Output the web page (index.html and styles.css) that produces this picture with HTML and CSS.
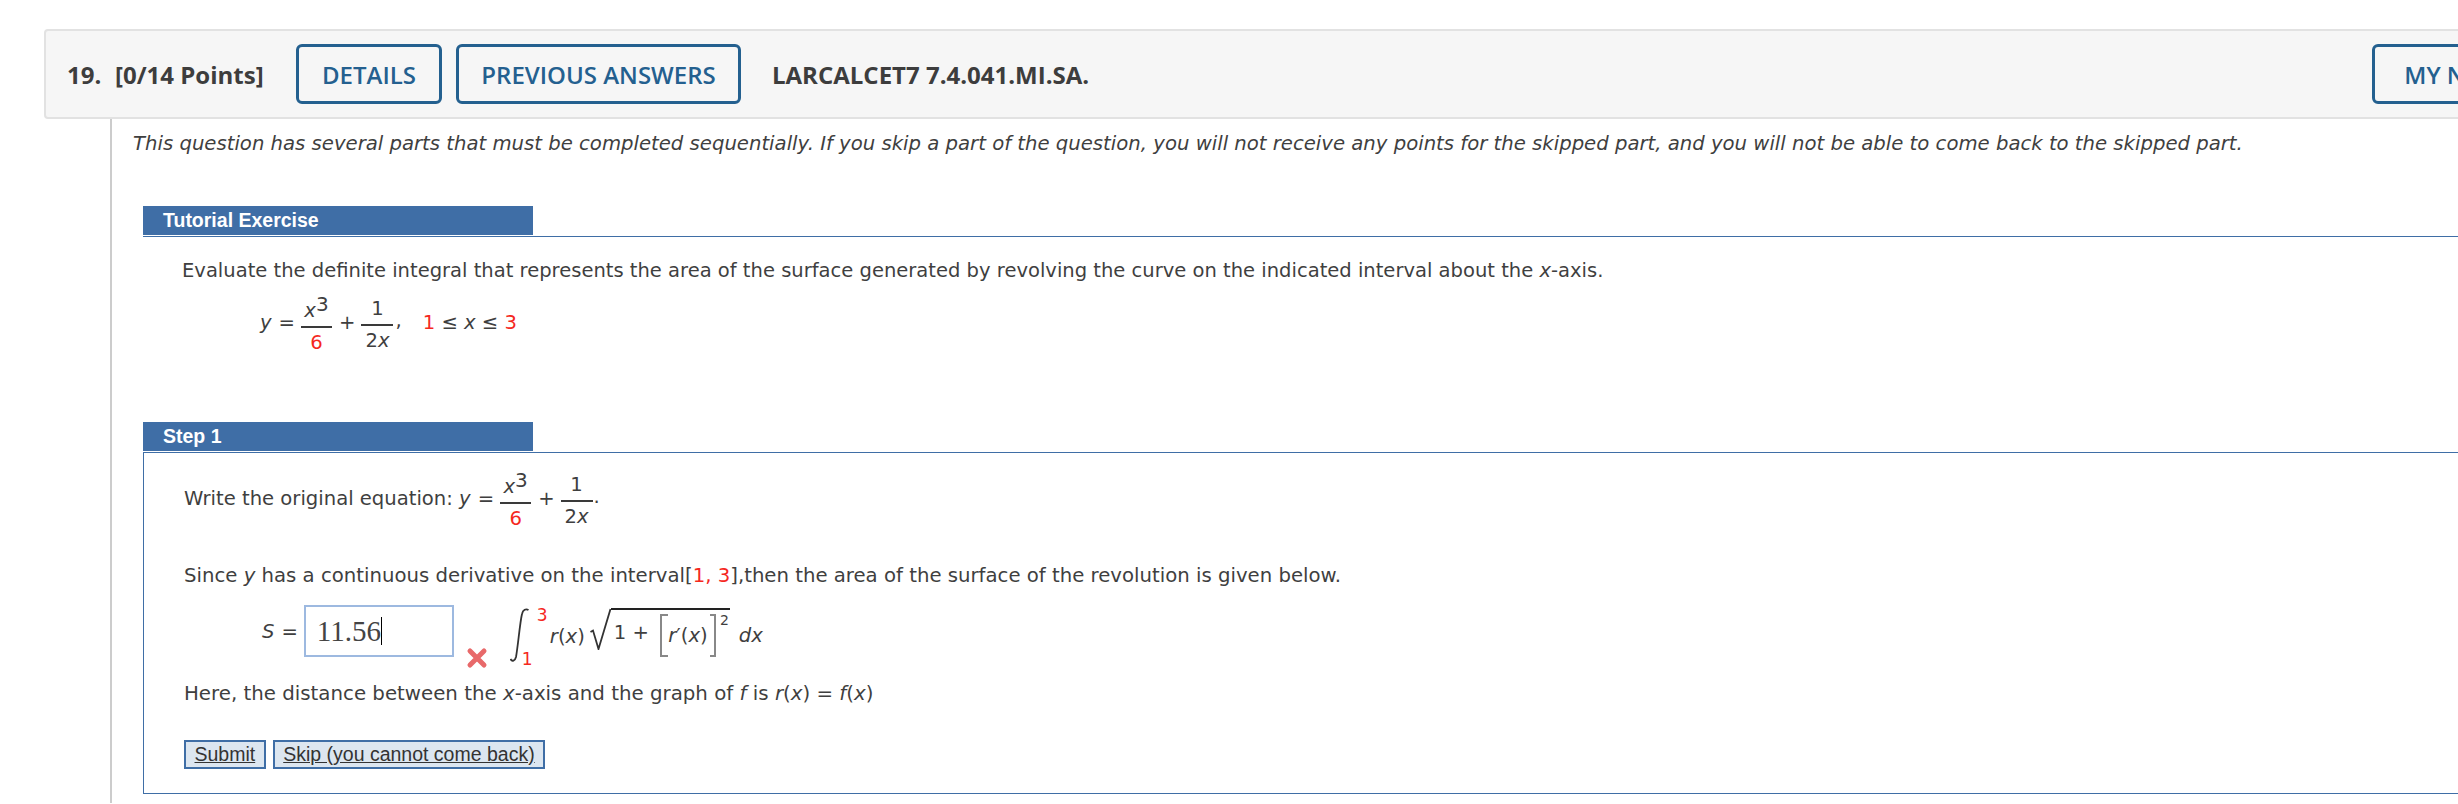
FILE: index.html
```html
<!DOCTYPE html>
<html lang="en">
<head>
<meta charset="utf-8">
<title>Question 19</title>
<link rel="stylesheet" href="styles.css">
</head>
<body>
<div class="page">
  <header class="qhead">
    <span class="qnum">19.</span>
    <span class="qpts">[0/14 Points]</span>
    <a class="hbtn btn-details">DETAILS</a>
    <a class="hbtn btn-prev">PREVIOUS ANSWERS</a>
    <span class="qref">LARCALCET7 7.4.041.MI.SA.</span>
    <a class="hbtn btn-notes">MY NOTES</a>
  </header>
  <main class="qbody">
    <p class="intro">This question has several parts that must be completed sequentially. If you skip a part of the question, you will not receive any points for the skipped part, and you will not be able to come back to the skipped part.</p>

    <section class="tutorial">
      <h2 class="banner">Tutorial Exercise</h2>
      <div class="tut-content">
        <p class="line evaluate">Evaluate the definite integral that represents the area of the surface generated by revolving the curve on the indicated interval about the <i>x</i>-axis.</p>
        <div class="eq eq-first">
          <i>y</i><span class="op">=</span>
          <span class="frac frac-a"><span class="num"><i>x</i><sup>3</sup></span><span class="den red">6</span></span>
          <span class="op">+</span>
          <span class="frac frac-b"><span class="num">1</span><span class="den">2<i>x</i></span></span><span class="comma">,</span>
          <span class="range"><span class="red">1</span> ≤ <i>x</i> ≤ <span class="red">3</span></span>
        </div>
      </div>
    </section>

    <section class="step">
      <h2 class="banner">Step 1</h2>
      <div class="step-box">
        <div class="eq eq-write">
          <span>Write the original equation:&nbsp;<i>y</i></span><span class="op">=</span>
          <span class="frac frac-a"><span class="num"><i>x</i><sup>3</sup></span><span class="den red">6</span></span>
          <span class="op">+</span>
          <span class="frac frac-b"><span class="num">1</span><span class="den">2<i>x</i></span></span><span class="dot">.</span>
        </div>
        <p class="line since">Since <i>y</i> has a continuous derivative on the interval[<span class="red">1, 3</span>],then the area of the surface of the revolution is given below.</p>
        <div class="answer">
          <i class="s-label">S</i><span class="op">=</span>
          <div class="field"><span class="field-val">11.56</span></div>
          <svg class="wrong" viewBox="0 0 22 22" aria-hidden="true"><path d="M4 4 L18 18 M18 4 L4 18"/></svg>
          <div class="integral">
            <svg class="int-sign" viewBox="0 0 19 54" aria-hidden="true"><path d="M0.500 51 C2 54 5 53 6 49 C8 38 10 14 12 6 C13 1.500 16 0.500 18.500 2"/></svg>
            <span class="lim lim-up red">3</span>
            <span class="lim lim-lo red">1</span>
          </div>
          <span class="rx"><i>r</i>(<i>x</i>)</span>
          <svg class="rad" viewBox="0 0 21 42" aria-hidden="true"><path d="M0.500 24 L3 22.500 L8.500 41 L20.500 1"/></svg>
          <span class="under">
            <span class="one-plus">1 +</span>
            <span class="brk"><i>r</i>′(<i>x</i>)</span>
            <sup class="pow">2</sup>
          </span>
          <span class="dx"><i>dx</i></span>
        </div>
        <p class="line here">Here, the distance between the <i>x</i>-axis and the graph of <i>f</i> is <i>r</i>(<i>x</i>) = <i>f</i>(<i>x</i>)</p>
        <div class="actions">
          <button class="act">Submit</button>
          <button class="act">Skip (you cannot come back)</button>
        </div>
      </div>
    </section>
  </main>
</div>
</body>
</html>
```
FILE: styles.css
```css
html, body {
  margin: 0;
  padding: 0;
  background: #fff;
  overflow: hidden;
}
.page {
  width: 2458px;
  height: 804px;
  overflow: hidden;
  font-family: "DejaVu Sans", sans-serif;
  color: #3f3f3f;
  padding-top: 29px;
  box-sizing: border-box;
}
.qhead {
  width: 2539px;
  height: 90px;
  margin-left: 44px;
  box-sizing: border-box;
  display: flex;
  align-items: center;
  background: #f6f6f6;
  border: 2px solid #e2e2e2;
  border-radius: 4px;
  padding-left: 21px;
  font-family: "Open Sans", sans-serif;
  font-weight: 700;
  font-size: 24px;
  color: #3d3d3d;
  white-space: nowrap;
}
.qnum { flex: none; width: 48px; }
.qpts { flex: none; width: 181px; }
.hbtn {
  display: flex;
  flex: none;
  align-items: center;
  justify-content: center;
  height: 60px;
  box-sizing: border-box;
  border: 3px solid #24608f;
  border-radius: 6px;
  color: #24608f;
  font-weight: 600;
}
.btn-details { width: 146px; margin-right: 14px; }
.btn-prev { width: 285px; margin-right: 31px; }
.btn-notes { width: 185px; margin-left: auto; margin-right: 24px; }
.qbody {
  margin-left: 110px;
  border-left: 2px solid #ccc;
  height: 684px;
  box-sizing: border-box;
  padding-top: 11px;
  width: 2348px;
}
.intro {
  margin: 0 0 0 21px;
  font-size: 19.660px;
  line-height: 28px;
  font-style: italic;
  white-space: nowrap;
}
.banner {
  margin: 0;
  width: 390px;
  height: 29px;
  box-sizing: border-box;
  background: #3f6ea6;
  color: #fff;
  font-family: "Liberation Sans", sans-serif;
  font-size: 19.500px;
  font-weight: 700;
  line-height: 29px;
  padding-left: 20px;
}
.tutorial {
  margin: 48px 0 0 31px;
}
.tut-content {
  border-top: 1px solid #3f6ea6;
  margin-top: 1px;
  padding: 20px 0 0 39px;
}
.line {
  margin: 0;
  font-size: 19.600px;
  line-height: 28px;
  white-space: nowrap;
}
.evaluate { font-size: 19.550px; }
.red { color: #f5281e; }
.eq {
  display: flex;
  align-items: center;
  font-size: 19.600px;
  line-height: 28px;
  height: 68px;
}
.eq-first { margin: 4px 0 0 78px; }
.op { margin: 0 6px 0 7px; }
.frac {
  display: inline-flex;
  flex-direction: column;
  align-items: center;
}
.frac-a { width: 31px; margin-top: 8px; }
.frac-b { width: 32px; margin-top: 4px; }
.num {
  box-sizing: content-box;
  height: 30px;
  border-bottom: 2px solid #3a3a3a;
  width: 100%;
  text-align: center;
  line-height: 30px;
}
.den {
  height: 30px;
  line-height: 30px;
}
.num sup {
  font-size: 20px;
  line-height: 0;
  vertical-align: 6px;
}
.comma { align-self: flex-end; margin-bottom: 22px; margin-left: 2px; }
.dot { align-self: flex-end; margin-bottom: 22px; margin-left: 1px; }
.range { margin-left: 21px; }
.step {
  margin: 0 0 0 31px;
  padding-top: 65px;
}
.step-box {
  border: 1px solid #3f6ea6;
  border-right: none;
  margin-top: 1px;
  height: 342px;
  box-sizing: border-box;
  padding: 12px 0 0 40px;
}
.since { margin-top: 29px; font-size: 19.700px; }
.answer {
  display: flex;
  align-items: center;
  margin: 14px 0 0 78px;
  height: 54px;
  font-size: 19.600px;
}
.field {
  flex: none;
  width: 150px;
  height: 52px;
  box-sizing: border-box;
  border: 2px solid #9db9e0;
  display: flex;
  align-items: center;
  padding-left: 11px;
  font-family: "Liberation Serif", serif;
  font-size: 29px;
  color: #444;
}
.field-val {
  border-right: 1px solid #000;
  line-height: 28px;
}
.wrong {
  width: 22px;
  height: 22px;
  margin: 54px 0 0 12px;
  flex: none;
  fill: none;
  stroke: #e8696a;
  stroke-width: 5;
  stroke-linecap: round;
}
.integral {
  position: relative;
  flex: none;
  width: 40px;
  height: 54px;
  margin: 8px 0 0 22px;
}
.int-sign {
  display: block;
  width: 19px;
  height: 54px;
  fill: none;
  stroke: #333;
  stroke-width: 1.800;
}
.lim {
  position: absolute;
  font-size: 17px;
  line-height: 20px;
}
.lim-up { left: 27px; top: -3px; }
.lim-lo { left: 12px; top: 41px; }
.rx { flex: none; margin-top: 10px; width: 35px; white-space: nowrap; }
.rad {
  flex: none;
  width: 21px;
  height: 42px;
  margin: -4px 0 0 5px;
  fill: none;
  stroke: #333;
  stroke-width: 1.800;
}
.under {
  flex: none;
  display: flex;
  align-items: flex-start;
  width: 119px;
  height: 50px;
  margin-top: 4px;
  box-sizing: border-box;
  border-top: 2px solid #222;
  padding-left: 3px;
}
.one-plus { margin-top: 11px; white-space: nowrap; }
.brk {
  flex: none;
  box-sizing: border-box;
  width: 56px;
  height: 43px;
  margin: 4px 0 0 11px;
  border: 2px solid #888;
  text-align: center;
  line-height: 39px;
  white-space: nowrap;
  clip-path: polygon(0 0, 8px 0, 8px 3px, calc(100% - 6px) 3px, calc(100% - 6px) 0, 100% 0, 100% 100%, calc(100% - 6px) 100%, calc(100% - 6px) calc(100% - 3px), 8px calc(100% - 3px), 8px 100%, 0 100%);
}
.pow {
  font-size: 14px;
  line-height: 16px;
  margin: 2px 0 0 4px;
}
.dx { margin: 8px 0 0 9px; }
.here { margin-top: 22px; font-size: 19.800px; }
.actions {
  margin-top: 32px;
  display: flex;
  gap: 7px;
}
.act {
  height: 29px;
  box-sizing: border-box;
  padding: 0 8.500px;
  border: 2px solid #3f6ea6;
  background: #dce6f0;
  color: #333;
  font-family: "Liberation Sans", sans-serif;
  font-size: 19.500px;
  line-height: 25px;
  text-decoration: underline;
  border-radius: 0;
}
```
